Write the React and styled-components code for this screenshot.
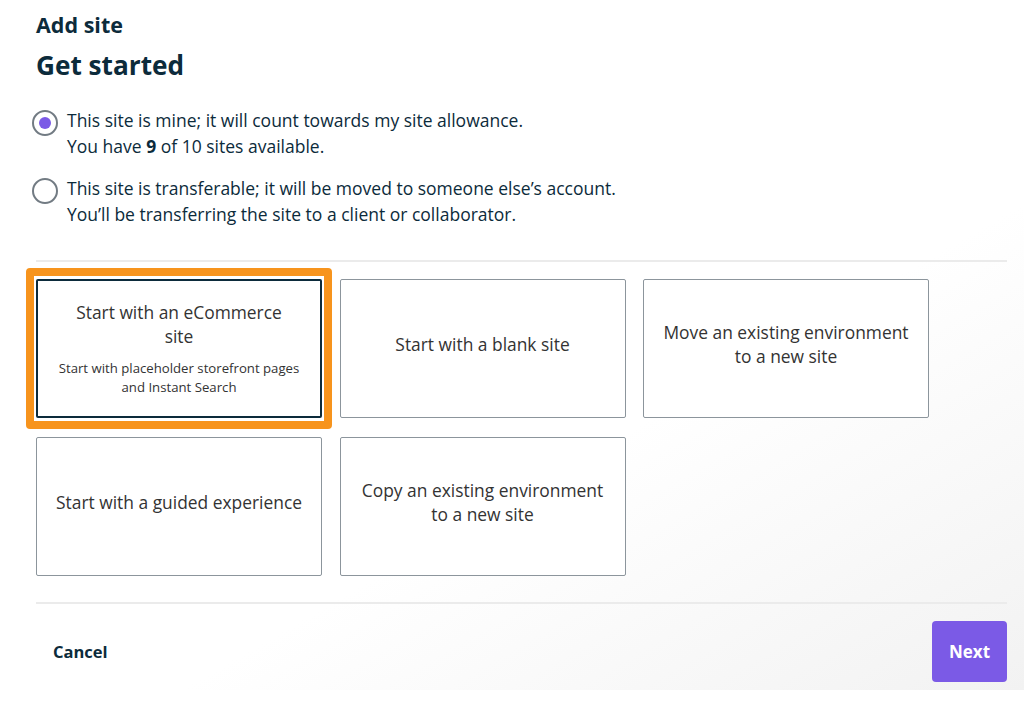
import React, { useState } from "react";
import styled, { createGlobalStyle } from "styled-components";

const Global = createGlobalStyle`
  html, body { margin: 0; padding: 0; background: #ffffff; }
  body { font-family: "Open Sans", "Noto Sans", sans-serif; color: #0c2b3b; }
  * { box-sizing: border-box; }
`;

const Page = styled.div`
  width: 1024px;
  height: 690px;
  padding: 10px 17px 0 36px;
  background: linear-gradient(150deg, #ffffff 62%, #f2f2f2 100%);
  display: flex;
  flex-direction: column;
`;

const Eyebrow = styled.h2`
  margin: 0;
  font-size: 21.5px;
  line-height: 30px;
  font-weight: 700;
  color: #0c2b3b;
`;

const Title = styled.h1`
  margin: 8px 0 0;
  font-size: 26.2px;
  line-height: 34px;
  font-weight: 700;
  color: #0c2b3b;
`;

const RadioList = styled.div`
  margin: 25px 0 0 -4px;
  display: flex;
  flex-direction: column;
  gap: 16px;
`;

const RadioRow = styled.label`
  display: flex;
  align-items: flex-start;
  gap: 9px;
  cursor: pointer;
`;

const RadioCircle = styled.span`
  flex: none;
  width: 26px;
  height: 26px;
  margin-top: 3px;
  border-radius: 50%;
  border: 2px solid #727b83;
  display: flex;
  align-items: center;
  justify-content: center;
  &::after {
    content: "";
    width: 12px;
    height: 12px;
    border-radius: 50%;
    background: ${(p) => (p.$checked ? "#7b5ae6" : "transparent")};
  }
`;

const RadioText = styled.div`
  font-size: 17.5px;
  line-height: 26px;
  color: #0c2b3b;
  b { font-weight: 700; }
`;

const Divider = styled.hr`
  margin: ${(p) => p.$mt}px 0 0;
  border: none;
  height: 2px;
  background: #ebebeb;
`;

const Grid = styled.div`
  margin-top: 17px;
  display: grid;
  grid-template-columns: repeat(3, 286px);
  grid-auto-rows: 139px;
  column-gap: 17.5px;
  row-gap: 19px;
`;

const Card = styled.button`
  position: relative;
  background: #ffffff;
  border: ${(p) => (p.$selected ? "2px solid #0c2b3b" : "1px solid #8c959c")};
  border-radius: 2px;
  padding: 0 17px ${(p) => (p.$hasDesc ? "0" : "10px")};
  display: flex;
  flex-direction: column;
  align-items: center;
  justify-content: center;
  gap: 11px;
  font-family: "Open Sans", "Noto Sans", sans-serif;
  color: #333333;
  cursor: pointer;
  text-align: center;
`;

const CardTitle = styled.span`
  font-size: 17.4px;
  line-height: 24px;
  max-width: ${(p) => (p.$narrow ? "225px" : "none")};
`;

const CardDesc = styled.span`
  font-size: 13.2px;
  line-height: 19px;
  color: #333333;
`;

const Highlight = styled.span`
  position: absolute;
  left: -12px;
  top: -13px;
  right: -12px;
  bottom: -13px;
  border: 8px solid #f7941d;
  border-radius: 4px;
  pointer-events: none;
`;

const Footer = styled.div`
  margin-top: 17px;
  display: flex;
  align-items: center;
  justify-content: space-between;
`;

const CancelButton = styled.button`
  background: none;
  border: none;
  padding: 0 17px;
  font-family: "Open Sans", "Noto Sans", sans-serif;
  font-size: 16.5px;
  font-weight: 700;
  color: #0c2b3b;
  cursor: pointer;
`;

const NextButton = styled.button`
  width: 75px;
  height: 61px;
  border: none;
  border-radius: 4px;
  background: #7b5ae6;
  color: #ffffff;
  font-family: "Open Sans", "Noto Sans", sans-serif;
  font-size: 17px;
  font-weight: 700;
  cursor: pointer;
`;

const cards = [
  { title: "Start with an eCommerce site", desc: ["Start with placeholder storefront pages", "and Instant Search"], selected: true },
  { title: "Start with a blank site" },
  { title: "Move an existing environment to a new site" },
  { title: "Start with a guided experience" },
  { title: "Copy an existing environment to a new site" },
];

export default function App() {
  const [owner, setOwner] = useState("mine");
  return (
    <>
      <Global />
      <Page>
        <Eyebrow>Add site</Eyebrow>
        <Title>Get started</Title>
        <RadioList>
          <RadioRow onClick={() => setOwner("mine")}>
            <RadioCircle $checked={owner === "mine"} />
            <RadioText>
              This site is mine; it will count towards my site allowance.
              <br />
              You have <b>9</b> of 10 sites available.
            </RadioText>
          </RadioRow>
          <RadioRow onClick={() => setOwner("transfer")}>
            <RadioCircle $checked={owner === "transfer"} />
            <RadioText>
              This site is transferable; it will be moved to someone else’s account.
              <br />
              You’ll be transferring the site to a client or collaborator.
            </RadioText>
          </RadioRow>
        </RadioList>
        <Divider $mt={33} />
        <Grid>
          {cards.map((c) => (
            <Card key={c.title} $selected={c.selected} $hasDesc={!!c.desc}>
              <CardTitle $narrow={!!c.desc}>{c.title}</CardTitle>
              {c.desc && (
                <CardDesc>
                  {c.desc[0]}
                  <br />
                  {c.desc[1]}
                </CardDesc>
              )}
              {c.selected && <Highlight />}
            </Card>
          ))}
        </Grid>
        <Divider $mt={26} />
        <Footer>
          <CancelButton>Cancel</CancelButton>
          <NextButton>Next</NextButton>
        </Footer>
      </Page>
    </>
  );
}
